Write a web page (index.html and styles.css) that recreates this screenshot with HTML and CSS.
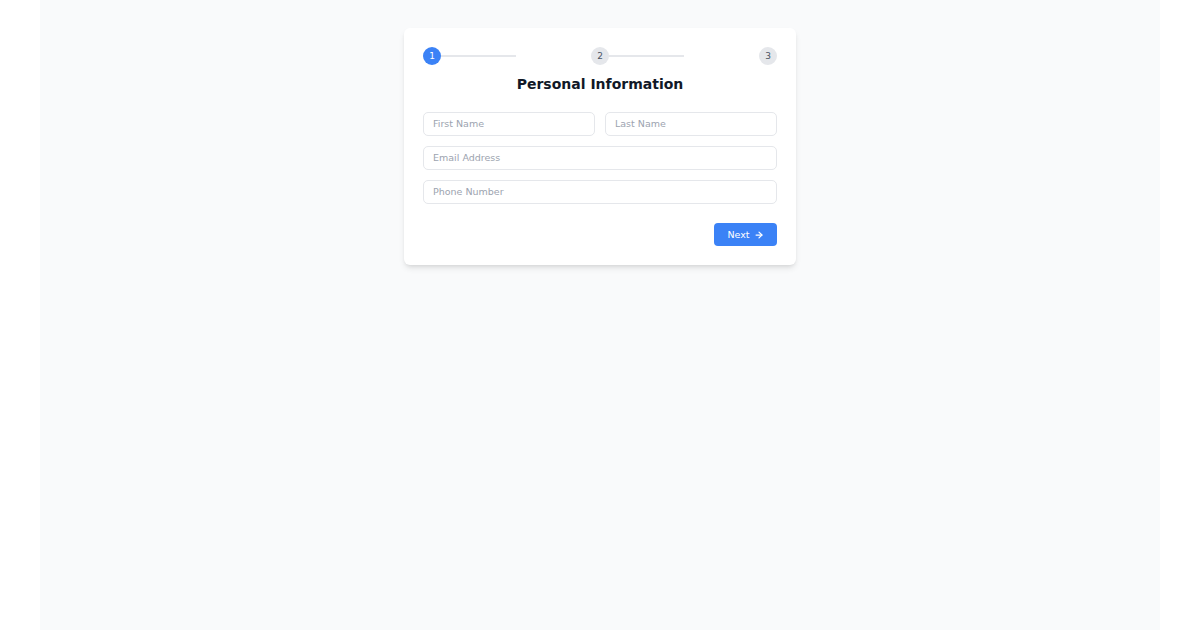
FILE: index.html
```html
<!DOCTYPE html>
<html>
<head>
<meta charset="utf-8">
<link rel="stylesheet" href="styles.css">
</head>
<body>
<div class="page">
  <div class="card">
    <div class="stepper">
      <div class="step">
        <span class="dot active">1</span>
        <span class="line"></span>
      </div>
      <div class="step">
        <span class="dot">2</span>
        <span class="line"></span>
      </div>
      <div class="step last">
        <span class="dot">3</span>
      </div>
    </div>
    <h2 class="title">Personal Information</h2>
    <form class="form">
      <div class="row">
        <input class="field" type="text" placeholder="First Name">
        <input class="field" type="text" placeholder="Last Name">
      </div>
      <input class="field" type="email" placeholder="Email Address">
      <input class="field" type="tel" placeholder="Phone Number">
      <div class="actions">
        <button type="button" class="btn">Next
          <svg class="arrow" viewBox="0 0 24 24" fill="none" stroke="currentColor" stroke-width="3" stroke-linecap="round" stroke-linejoin="round"><path d="M5 12h14"/><path d="M12 5l7 7-7 7"/></svg>
        </button>
      </div>
    </form>
  </div>
</div>
</body>
</html>
```
FILE: styles.css
```css
* { box-sizing: border-box; }
html, body { margin: 0; padding: 0; background: #ffffff; }
body { font-family: "DejaVu Sans", sans-serif; }
.page {
  width: 1120px;
  margin: 0 auto;
  min-height: 630px;
  background: #f9fafb;
  padding-top: 28px;
}
.card {
  width: 392px;
  margin: 0 auto;
  background: #ffffff;
  border-radius: 6px;
  box-shadow: 0 4px 6px -1px rgba(0,0,0,0.1), 0 2px 4px -2px rgba(0,0,0,0.1);
  padding: 19px 19px 19px 19px;
}
.stepper {
  display: flex;
  align-items: center;
}
.step {
  flex: 1;
  display: flex;
  align-items: center;
}
.step.last { flex: 0 0 auto; }
.dot {
  width: 18px;
  height: 18px;
  border-radius: 50%;
  background: #e5e7eb;
  color: #4b5563;
  font-size: 9px;
  display: flex;
  align-items: center;
  justify-content: center;
  flex-shrink: 0;
}
.dot.active { background: #3b82f6; color: #ffffff; }
.line {
  width: 75px;
  height: 2px;
  background: #e5e7eb;
}
.title {
  margin: 9px 0 18px;
  text-align: center;
  font-size: 14px;
  line-height: 20px;
  font-weight: bold;
  color: #111827;
}
.form {
  display: flex;
  flex-direction: column;
  gap: 10px;
}
.row {
  display: flex;
  gap: 10px;
}
.row .field { flex: 1; min-width: 0; }
.field {
  height: 24px;
  border: 1px solid #e5e7eb;
  border-radius: 5px;
  padding: 0 0 1px 9px;
  font-family: "DejaVu Sans", sans-serif;
  font-size: 9.5px;
  color: #111827;
  background: #fff;
  outline: none;
}
.field::placeholder { color: #9ca3af; }
.actions {
  display: flex;
  justify-content: flex-end;
  margin-top: 9px;
}
.btn {
  height: 23px;
  width: 63px;
  border: none;
  border-radius: 4px;
  background: #3b82f6;
  color: #ffffff;
  font-family: "DejaVu Sans", sans-serif;
  font-size: 9.5px;
  display: flex;
  align-items: center;
  justify-content: center;
  gap: 4px;
  padding: 0;
}
.arrow { width: 10px; height: 10px; }
```
